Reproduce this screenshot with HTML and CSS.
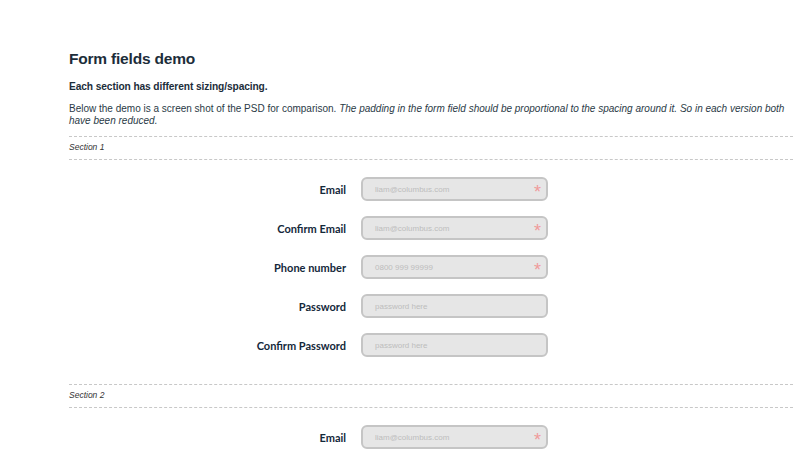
FILE: index.html
```html
<!DOCTYPE html>
<html>
<head>
<meta charset="utf-8">
<link rel="stylesheet" href="styles.css">
</head>
<body>
<div class="page">
  <h1 class="title">Form fields demo</h1>
  <p class="lead">Each section has different sizing/spacing.</p>
  <p class="intro">Below the demo is a screen shot of the PSD for comparison. <em>The padding in the form field should be proportional to the spacing around it. So in each version both have been reduced.</em></p>

  <div class="section-head">Section 1</div>
  <div class="form">
    <div class="row"><label class="label">Email</label><div class="field"><span class="ph">liam@columbus.com</span><span class="req">*</span></div></div>
    <div class="row"><label class="label">Confirm Email</label><div class="field"><span class="ph">liam@columbus.com</span><span class="req">*</span></div></div>
    <div class="row"><label class="label">Phone number</label><div class="field"><span class="ph">0800 999 99999</span><span class="req">*</span></div></div>
    <div class="row"><label class="label">Password</label><div class="field"><span class="ph">password here</span></div></div>
    <div class="row"><label class="label">Confirm Password</label><div class="field"><span class="ph">password here</span></div></div>
  </div>

  <div class="section-head">Section 2</div>
  <div class="form">
    <div class="row"><label class="label">Email</label><div class="field"><span class="ph">liam@columbus.com</span><span class="req">*</span></div></div>
  </div>
</div>
</body>
</html>
```
FILE: styles.css
```css
html, body { margin: 0; padding: 0; background: #fff; }
body { font-family: "Liberation Sans", Arial, sans-serif; color: #1c2d3a; }
.page { padding: 50px 7px 0 69px; }
.title { font-size: 15.5px; font-weight: bold; margin: 0 0 12px; line-height: 18px; letter-spacing: -0.2px; }
.lead { font-size: 10.2px; font-weight: bold; margin: 0 0 9px; line-height: 14px; letter-spacing: -0.1px; }
.intro { font-size: 10px; margin: 0 0 9px; line-height: 12px; color: #2a3a46; }
.section-head {
  border-top: 1px dashed #c8c8c8;
  border-bottom: 1px dashed #c8c8c8;
  font-size: 8.5px; font-style: italic; color: #333;
  padding: 6px 0 7px; line-height: 9px;
}
.form { display: flex; flex-direction: column; gap: 15px; padding: 17px 0 27px; }
.row { display: flex; align-items: center; }
.label {
  width: 277px; text-align: right; padding-right: 15px;
  font-family: Lato, sans-serif; font-weight: bold; font-size: 11px; color: #14283a;
}
.field {
  height: 20px; border: 2px solid #c5c5c5; border-radius: 6px;
  background: #e6e6e6; display: flex; align-items: center; justify-content: space-between;
  padding: 0 0 0 12px; width: 171px;
}
.ph { font-size: 8px; color: #bdbdbd; }
.req { color: #f09a9a; font-size: 18px; line-height: 12px; height: 12px; padding-top: 6px; margin-right: 5px; }
```
